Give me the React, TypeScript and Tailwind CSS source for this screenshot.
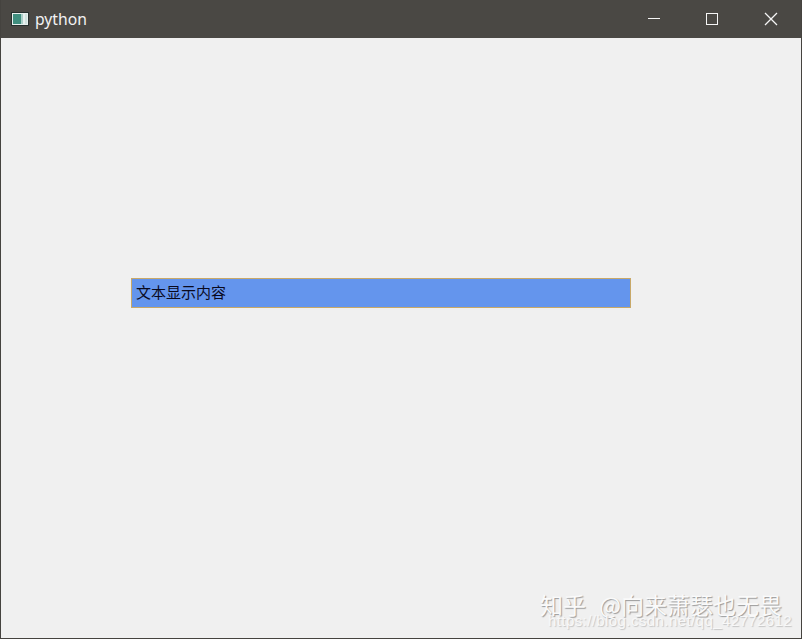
import React from "react";

const cjk = "font-['Noto_Sans_CJK_SC','Liberation_Sans',sans-serif]";

const TitleBar = () => (
  <div className="flex h-[38px] shrink-0 items-center justify-between bg-[#4a4844] pl-[10px]">
    <div className="flex items-center gap-[6px]">
      <svg width="18" height="14" viewBox="0 0 18 14">
        <rect x="0.5" y="0.5" width="17" height="13" fill="#e8f0ee" stroke="#26302e" />
        <rect x="2" y="2" width="8" height="10" fill="#3f8f7f" />
        <rect x="10" y="2" width="2" height="10" fill="#a9cfc8" />
        <rect x="14" y="2" width="2" height="10" fill="#cfe3df" />
      </svg>
      <span className="pt-[2px] font-['Noto_Sans','Liberation_Sans',sans-serif] text-[15.7px] text-[#f2f2f2]">python</span>
    </div>
    <div className="flex h-full items-center">
      <button className="flex h-full w-[58px] items-center justify-center">
        <svg width="14" height="14" viewBox="0 0 14 14">
          <path d="M1 6.5H13" stroke="#f5f5f5" strokeWidth="1" fill="none" />
        </svg>
      </button>
      <button className="flex h-full w-[58px] items-center justify-center">
        <svg width="14" height="14" viewBox="0 0 14 14">
          <rect x="1.5" y="1.5" width="11" height="11" stroke="#f5f5f5" strokeWidth="1" fill="none" />
        </svg>
      </button>
      <button className="flex h-full w-[60px] items-center justify-center">
        <svg width="14" height="14" viewBox="0 0 14 14">
          <path d="M1 1L13 13M13 1L1 13" stroke="#f5f5f5" strokeWidth="1.3" fill="none" />
        </svg>
      </button>
    </div>
  </div>
);

export default function App() {
  return (
    <div className="relative flex h-[639px] w-[802px] flex-col overflow-hidden border border-t-0 border-[#45433f] bg-[#f0f0f0]">
      <TitleBar />
      <div className="flex-1 pl-[130px] pt-[240px]">
        <div
          className={`flex h-[30px] w-[500px] items-center border border-[#c8a868] bg-[#6495ed] pb-[3px] pl-1 text-[15px] leading-none text-[#0a0a1e] ${cjk}`}
        >
          文本显示内容
        </div>
      </div>
      <div className="pointer-events-none absolute bottom-[9px] right-[9px] flex flex-col items-end">
        <span
          className={`mr-[10px] text-[23px] leading-[28px] text-[#fafafa] [word-spacing:8px] [text-shadow:1px_1px_1px_#9a9a9a] ${cjk}`}
        >
          知乎 @向来萧瑟也无畏
        </span>
        <span className="-mt-[5px] font-['Liberation_Sans',sans-serif] text-[15px] leading-[16px] tracking-[0.42px] text-[#f8f8f8] [text-shadow:1px_1px_1px_#c4c4c4]">
          https://blog.csdn.net/qq_42772612
        </span>
      </div>
    </div>
  );
}
